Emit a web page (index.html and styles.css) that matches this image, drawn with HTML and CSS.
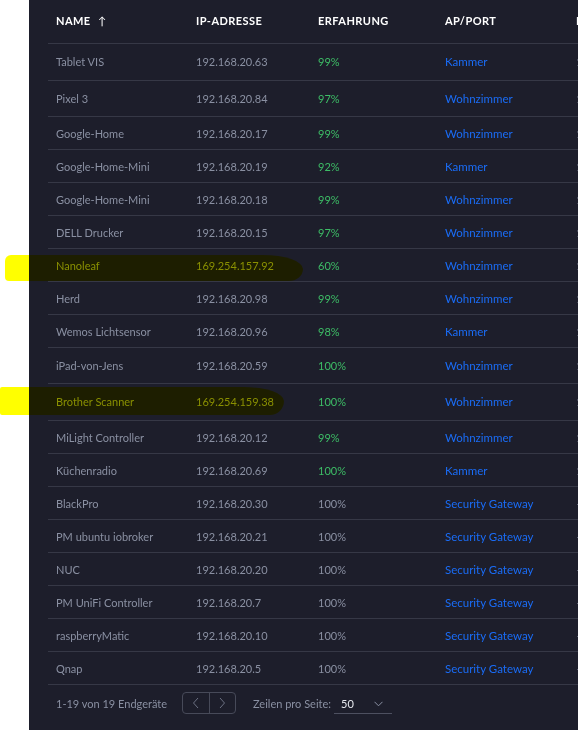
FILE: index.html
```html
<!DOCTYPE html>
<html lang="de">
<head>
<meta charset="utf-8">
<title>Endgeräte</title>
<link rel="stylesheet" href="styles.css">
</head>
<body>
<div class="page">
  <div class="gutter"></div>
  <div class="panel">
    <div class="table">
      <div class="row head h44">
        <span>NAME <span class="arrow">&#8593;</span></span><span>IP-ADRESSE</span><span>ERFAHRUNG</span><span>AP/PORT</span><span class="cut">I</span>
      </div>
      <div class="row h37"><span>Tablet VIS</span><span>192.168.20.63</span><span class="ok">99%</span><span class="ap">Kammer</span><span class="cut">1</span></div>
      <div class="row h36"><span>Pixel 3</span><span>192.168.20.84</span><span class="ok">97%</span><span class="ap">Wohnzimmer</span><span class="cut">1</span></div>
      <div class="row"><span>Google-Home</span><span>192.168.20.17</span><span class="ok">99%</span><span class="ap">Wohnzimmer</span><span class="cut">1</span></div>
      <div class="row"><span>Google-Home-Mini</span><span>192.168.20.19</span><span class="ok">92%</span><span class="ap">Kammer</span><span class="cut">1</span></div>
      <div class="row"><span>Google-Home-Mini</span><span>192.168.20.18</span><span class="ok">99%</span><span class="ap">Wohnzimmer</span><span class="cut">1</span></div>
      <div class="row"><span>DELL Drucker</span><span>192.168.20.15</span><span class="ok">97%</span><span class="ap">Wohnzimmer</span><span class="cut">1</span></div>
      <div class="row"><span>Nanoleaf</span><span>169.254.157.92</span><span class="ok">60%</span><span class="ap">Wohnzimmer</span><span class="cut">1</span></div>
      <div class="row"><span>Herd</span><span>192.168.20.98</span><span class="ok">99%</span><span class="ap">Wohnzimmer</span><span class="cut">1</span></div>
      <div class="row"><span>Wemos Lichtsensor</span><span>192.168.20.96</span><span class="ok">98%</span><span class="ap">Kammer</span><span class="cut">1</span></div>
      <div class="row h36"><span>iPad-von-Jens</span><span>192.168.20.59</span><span class="ok">100%</span><span class="ap">Wohnzimmer</span><span class="cut">1</span></div>
      <div class="row h37"><span>Brother Scanner</span><span>169.254.159.38</span><span class="ok">100%</span><span class="ap">Wohnzimmer</span><span class="cut">1</span></div>
      <div class="row"><span>MiLight Controller</span><span>192.168.20.12</span><span class="ok">99%</span><span class="ap">Wohnzimmer</span><span class="cut">1</span></div>
      <div class="row"><span>Küchenradio</span><span>192.168.20.69</span><span class="ok">100%</span><span class="ap">Kammer</span><span class="cut">1</span></div>
      <div class="row"><span>BlackPro</span><span>192.168.20.30</span><span>100%</span><span class="ap">Security Gateway</span><span class="cut">–</span></div>
      <div class="row"><span>PM ubuntu iobroker</span><span>192.168.20.21</span><span>100%</span><span class="ap">Security Gateway</span><span class="cut">–</span></div>
      <div class="row"><span>NUC</span><span>192.168.20.20</span><span>100%</span><span class="ap">Security Gateway</span><span class="cut">–</span></div>
      <div class="row"><span>PM UniFi Controller</span><span>192.168.20.7</span><span>100%</span><span class="ap">Security Gateway</span><span class="cut">–</span></div>
      <div class="row"><span>raspberryMatic</span><span>192.168.20.10</span><span>100%</span><span class="ap">Security Gateway</span><span class="cut">–</span></div>
      <div class="row"><span>Qnap</span><span>192.168.20.5</span><span>100%</span><span class="ap">Security Gateway</span><span class="cut">–</span></div>
    </div>
    <div class="footer">
      <span class="count">1-19 von 19 Endgeräte</span>
      <div class="pager">
        <button class="pbtn" aria-label="zurück"><svg width="8" height="12" viewBox="0 0 8 12"><path d="M6 1 L1.5 6 L6 11" fill="none" stroke="#6b7082" stroke-width="1"/></svg></button>
        <button class="pbtn" aria-label="weiter"><svg width="8" height="12" viewBox="0 0 8 12"><path d="M2 1 L6.5 6 L2 11" fill="none" stroke="#6b7082" stroke-width="1"/></svg></button>
      </div>
      <span class="rows-label">Zeilen pro Seite:</span>
      <div class="select"><span>50</span><svg width="9" height="6" viewBox="0 0 9 6"><path d="M0.5 0.8 L4.5 4.8 L8.5 0.8" fill="none" stroke="#8a90a3" stroke-width="1"/></svg></div>
    </div>
  </div>
  <div class="mark mark-nano"></div>
  <div class="mark mark-brother"></div>
</div>
</body>
</html>
```

FILE: styles.css
```css
html, body {
  margin: 0;
  padding: 0;
  width: 578px;
  height: 730px;
  overflow: hidden;
  background: #ffffff;
}

.page {
  position: relative;
  display: flex;
  width: 578px;
  height: 730px;
  font-family: Lato, "Open Sans", sans-serif;
  font-size: 11px;
  color: #8a90a2;
}

.gutter {
  width: 29px;
  flex: none;
  background: #ffffff;
}

.panel {
  flex: 1;
  background: #1d1e2b;
  display: flex;
  flex-direction: column;
  overflow: hidden;
}

.table {
  display: flex;
  flex-direction: column;
}

.row {
  box-sizing: border-box;
  height: 33px;
  margin-left: 19px;
  padding-left: 8px;
  display: grid;
  grid-template-columns: 140px 122px 127px 131px 40px;
  align-items: center;
  border-bottom: 1px solid #363846;
  white-space: nowrap;
}

.row.h44 { height: 44px; }
.row.h37 { height: 37px; padding-bottom: 1px; }
.row.h36 { height: 36px; }

.row.head {
  color: #ffffff;
  font-weight: 700;
  font-size: 11px;
  letter-spacing: 0.45px;
  padding-bottom: 3px;
}

.arrow {
  font-weight: 400;
  margin-left: 4px;
}

.ok { color: #3dbd66; }
.ap { color: #1a6cf6; font-size: 11.5px; }
.cut { color: #6f7587; }
.head .cut { color: #ffffff; }

.footer {
  display: flex;
  align-items: center;
  height: 36px;
  padding-left: 27px;
}

.count {
  width: 126px;
  flex: none;
}

.pager {
  display: flex;
  box-sizing: border-box;
  width: 54px;
  height: 22px;
  border: 1px solid #474a59;
  border-radius: 4px;
}

.pbtn {
  flex: 1;
  display: flex;
  align-items: center;
  justify-content: center;
  background: transparent;
  border: 0;
  padding: 0;
}

.pbtn + .pbtn {
  border-left: 1px solid #474a59;
}

.rows-label {
  margin-left: 17px;
}

.select {
  display: flex;
  align-items: center;
  justify-content: space-between;
  box-sizing: border-box;
  width: 58px;
  height: 22px;
  margin-left: 3px;
  padding: 2px 9px 0 7px;
  border-bottom: 1px solid #4d5060;
  color: #e6e8ee;
  font-size: 11px;
}

.mark {
  position: absolute;
  background: #ffff00;
  mix-blend-mode: multiply;
  pointer-events: none;
}

.mark-nano {
  left: 5px;
  top: 255px;
  width: 298px;
  height: 26px;
  border-radius: 6px 40px 14px 4px / 6px 14px 12px 4px;
}

.mark-brother {
  left: 0;
  top: 387px;
  width: 284px;
  height: 28px;
  border-radius: 2px 40px 14px 2px / 2px 14px 14px 2px;
}
```
